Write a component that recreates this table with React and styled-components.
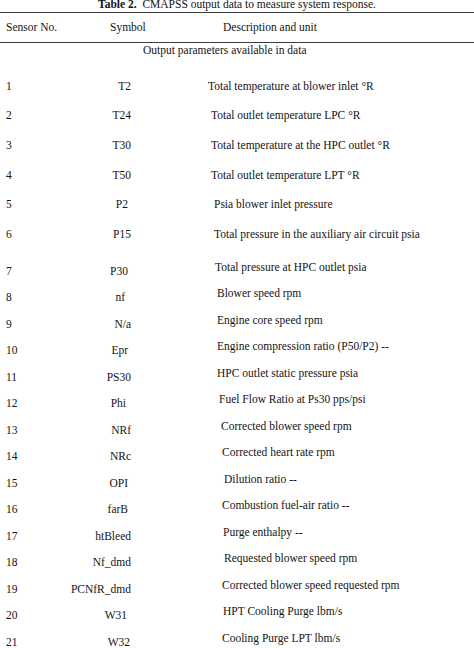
import React from "react";
import styled, { createGlobalStyle } from "styled-components";

const rows = [
  { no: 1, sym: "T2", desc: "Total temperature at blower inlet °R", indent: 0, shift: 0 },
  { no: 2, sym: "T24", desc: "Total outlet temperature LPC °R", indent: 3, shift: 0 },
  { no: 3, sym: "T30", desc: "Total temperature at the HPC outlet °R", indent: 3, shift: 0 },
  { no: 4, sym: "T50", desc: "Total outlet temperature LPT °R", indent: 3, shift: 0 },
  { no: 5, sym: "P2", desc: "Psia blower inlet pressure", indent: 6, shift: 3 },
  { no: 6, sym: "P15", desc: "Total pressure in the auxiliary air circuit psia", indent: 6, shift: 0 },
  { no: 7, sym: "P30", desc: "Total pressure at HPC outlet psia", indent: 7, shift: 3 },
  { no: 8, sym: "nf", desc: "Blower speed rpm", indent: 9, shift: 6 },
  { no: 9, sym: "N/a", desc: "Engine core speed rpm", indent: 9, shift: 0 },
  { no: 10, sym: "Epr", desc: "Engine compression ratio (P50/P2) --", indent: 9, shift: 3 },
  { no: 11, sym: "PS30", desc: "HPC outlet static pressure psia", indent: 9, shift: 0 },
  { no: 12, sym: "Phi", desc: "Fuel Flow Ratio at Ps30 pps/psi", indent: 11, shift: 5 },
  { no: 13, sym: "NRf", desc: "Corrected blower speed rpm", indent: 13, shift: 0 },
  { no: 14, sym: "NRc", desc: "Corrected heart rate rpm", indent: 14, shift: 0 },
  { no: 15, sym: "OPI", desc: "Dilution ratio --", indent: 16, shift: 3 },
  { no: 16, sym: "farB", desc: "Combustion fuel-air ratio --", indent: 14, shift: 3 },
  { no: 17, sym: "htBleed", desc: "Purge enthalpy --", indent: 15, shift: 0 },
  { no: 18, sym: "Nf_dmd", desc: "Requested blower speed rpm", indent: 16, shift: 0 },
  { no: 19, sym: "PCNfR_dmd", desc: "Corrected blower speed requested rpm", indent: 14, shift: 0 },
  { no: 20, sym: "W31", desc: "HPT Cooling Purge lbm/s", indent: 15, shift: 4 },
  { no: 21, sym: "W32", desc: "Cooling Purge LPT lbm/s", indent: 14, shift: 1 },
];

const Global = createGlobalStyle`
  html, body {
    margin: 0;
    padding: 0;
    background: #fff;
  }
  body {
    font-family: "Liberation Serif", "Times New Roman", serif;
    font-size: 11.5px;
    color: #141414;
  }
`;

const Page = styled.div`
  width: 474px;
  height: 648px;
  overflow: hidden;
`;

const Caption = styled.div`
  height: 12px;
  line-height: 9px;
  text-align: center;
  white-space: pre;
  b {
    font-weight: bold;
  }
`;

const HeadRow = styled.div`
  display: flex;
  height: 29px;
  line-height: 29px;
  border-top: 1.5px solid #3c3c3c;
  border-bottom: 1.5px solid #3c3c3c;
  padding-left: 6px;
`;

const HeadCell = styled.div`
  width: ${(p) => p.$w}px;
  flex: ${(p) => (p.$w ? "none" : "1")};
  white-space: nowrap;
`;

const GroupTitle = styled.div`
  height: 14px;
  line-height: 14px;
  padding-left: 143px;
  margin-bottom: 14px;
`;

const Row = styled.div`
  display: flex;
  align-items: center;
  height: ${(p) => (p.$tall ? 29.6 : 26.5)}px;
  margin-top: ${(p) => p.$gap || 0}px;
  padding-left: 6px;
  white-space: nowrap;
`;

const Num = styled.div`
  width: 50px;
`;

const Sym = styled.div`
  width: 75px;
  text-align: right;
  padding-right: ${(p) => p.$shift}px;
  box-sizing: border-box;
`;

const Desc = styled.div`
  margin-left: 77px;
  padding-left: ${(p) => p.$indent}px;
  padding-bottom: ${(p) => (p.$lift ? 8 : 0)}px;
`;

export default function App() {
  return (
    <Page>
      <Global />
      <Caption>
        <b>Table 2.</b>{"  CMAPSS output data to measure system response."}
      </Caption>
      <HeadRow>
        <HeadCell $w={104}>Sensor No.</HeadCell>
        <HeadCell $w={113}>Symbol</HeadCell>
        <HeadCell>Description and unit</HeadCell>
      </HeadRow>
      <GroupTitle>Output parameters available in data</GroupTitle>
      {rows.map((r) => (
        <Row key={r.no} $tall={r.no <= 6} $gap={r.no === 7 ? 9 : 0}>
          <Num>{r.no}</Num>
          <Sym $shift={r.shift}>{r.sym}</Sym>
          <Desc $indent={r.indent} $lift={r.no >= 7}>
            {r.desc}
          </Desc>
        </Row>
      ))}
    </Page>
  );
}
